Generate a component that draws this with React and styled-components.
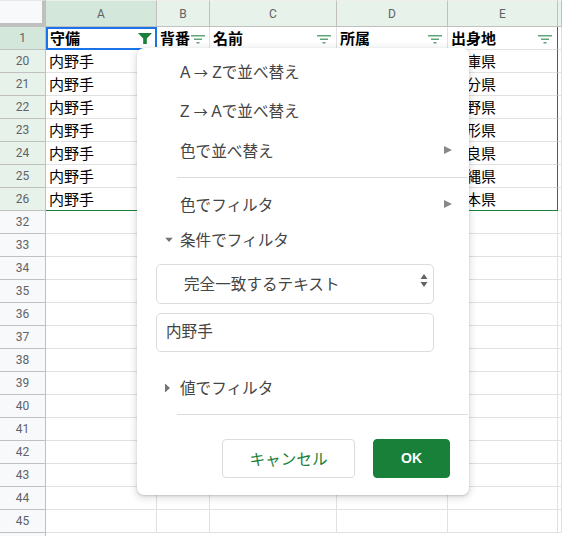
import React from 'react';
import styled, { createGlobalStyle } from 'styled-components';

const FONT = `Roboto, "Liberation Sans", "Noto Sans CJK JP", sans-serif`;
const MENU_FONT = `"Liberation Sans", "Noto Sans CJK JP", sans-serif`;

const GlobalStyle = createGlobalStyle`
  html, body {
    margin: 0;
    padding: 0;
    height: 100%;
    overflow: hidden;
    background: #fff;
  }
`;

const Sheet = styled.div`
  position: relative;
  width: 562px;
  height: 536px;
  overflow: hidden;
  font-family: ${FONT};
  display: grid;
  grid-template-columns: 46px 111px 53px 127px 111px 110px 4px;
  grid-auto-rows: 23px;
  grid-template-rows: 27px;
`;

const Corner = styled.div`
  box-sizing: border-box;
  background: #f8f9fa;
  border-top: 1px solid #e8e8e8;
  border-right: 4px solid #c0c0c0;
  border-bottom: 4px solid #c0c0c0;
`;

const ColHead = styled.div`
  box-sizing: border-box;
  display: flex;
  align-items: center;
  justify-content: center;
  padding-top: 1px;
  font-size: 12px;
  color: #5f6368;
  background: ${(p) => (p.$active ? '#d3e8da' : '#e6f2ea')};
  border-top: 1px solid #eeeeee;
  border-right: 1px solid #c0c0c0;
  border-bottom: 1px solid #c0c0c0;
`;

const RowHead = styled.div`
  box-sizing: border-box;
  display: flex;
  align-items: center;
  justify-content: center;
  font-size: 12px;
  color: #5f6368;
  background: ${(p) => (p.$tone === 'active' ? '#d3e8da' : p.$tone === 'range' ? '#e6f2ea' : '#f8f9fa')};
  border-right: 1px solid #c0c0c0;
  border-bottom: 1px solid #c0c0c0;
`;

const Cell = styled.div`
  box-sizing: border-box;
  position: relative;
  display: flex;
  align-items: center;
  padding-left: 3px;
  padding-bottom: 2px;
  font-size: 15px;
  font-weight: ${(p) => (p.$bold ? 700 : 400)};
  color: #000;
  white-space: nowrap;
  overflow: hidden;
  border-right: 1px solid ${(p) => (p.$edge ? '#1a8038' : '#e1e1e1')};
  border-bottom: 1px solid ${(p) => (p.$last ? '#1a8038' : '#e1e1e1')};
`;

const FilterSlot = styled.span`
  position: absolute;
  right: ${(p) => p.$right || 4}px;
  top: ${(p) => p.$top || 6}px;
  display: flex;
`;

const SelectedCell = styled(Cell)`
  overflow: visible;
  border: none;
  padding-left: 4px;
  box-shadow: inset 0 0 0 2px #1a73e8;
`;

const Handle = styled.span`
  position: absolute;
  right: -2px;
  bottom: -2px;
  width: 6px;
  height: 5px;
  background: #1a73e8;
  border: 1px solid #fff;
  border-right: none;
  border-bottom: none;
  box-sizing: border-box;
`;

const Popover = styled.div`
  position: absolute;
  left: 137px;
  top: 48px;
  box-sizing: border-box;
  width: 332px;
  height: 447px;
  background: #fff;
  border-radius: 7px;
  box-shadow: 0 2px 6px 2px rgba(60, 64, 67, 0.15), 0 1px 2px rgba(60, 64, 67, 0.2);
  padding-top: 5px;
  display: flex;
  flex-direction: column;
  font-family: ${MENU_FONT};
  color: #3c4043;
`;

const MenuItem = styled.div`
  box-sizing: border-box;
  display: flex;
  align-items: center;
  justify-content: space-between;
  height: ${(p) => p.$h}px;
  margin-top: ${(p) => p.$mt || 0}px;
  padding-left: 43px;
  padding-right: 17px;
  padding-bottom: ${(p) => p.$pb ?? 2}px;
  font-size: 15.6px;
  color: #444;
  position: relative;
  white-space: pre;
`;

const SortLabel = styled.span`
  white-space: pre;
`;

const ArrowGlyph = styled.span`
  font-family: "Noto Sans CJK JP", sans-serif;
  font-size: 14px;
`;

const Caret = styled.svg`
  position: absolute;
  left: ${(p) => p.$left}px;
  top: 50%;
  transform: translateY(-50%);
`;

const Separator = styled.div`
  height: 1px;
  background: #dadce0;
  margin-left: 40px;
  margin-right: 1px;
  margin-top: ${(p) => p.$mt || 0}px;
`;

const Field = styled.div`
  box-sizing: border-box;
  position: relative;
  display: flex;
  align-items: center;
  width: 278px;
  height: ${(p) => p.$h}px;
  margin-left: 19px;
  margin-top: ${(p) => p.$mt}px;
  padding-left: ${(p) => p.$pl}px;
  padding-bottom: ${(p) => p.$pb}px;
  border: 1px solid #dadce0;
  border-radius: 5px;
  font-size: 15.6px;
  color: #444;
`;

const Spinner = styled.svg`
  position: absolute;
  right: 5px;
  top: 9px;
`;

const Actions = styled.div`
  display: flex;
  justify-content: flex-end;
  gap: 18px;
  margin-top: 24px;
  padding-right: 19px;
`;

const Button = styled.div`
  box-sizing: border-box;
  display: flex;
  align-items: center;
  justify-content: center;
  height: 39px;
  width: ${(p) => (p.$primary ? 77 : 133)}px;
  padding-bottom: 1px;
  border-radius: 4px;
  border: 1px solid ${(p) => (p.$primary ? '#188038' : '#dadce0')};
  background: ${(p) => (p.$primary ? '#188038' : '#fff')};
  color: ${(p) => (p.$primary ? '#fff' : '#188038')};
  font-size: ${(p) => (p.$primary ? 14 : 15.6)}px;
  font-weight: ${(p) => (p.$primary ? 700 : 400)};
`;

const FilterIcon = () => (
  <svg width="16" height="12" viewBox="0 0 16 12">
    <rect x="1" y="2" width="14" height="1.5" fill="#5fa578" />
    <rect x="4" y="5.5" width="8" height="1.5" fill="#5fa578" />
    <rect x="6.5" y="9" width="3" height="1.5" fill="#5fa578" />
  </svg>
);

const ActiveFilterIcon = () => (
  <svg width="16" height="13" viewBox="0 0 16 13">
    <path d="M1 1h14L9.8 6.6V12H6.2V6.6z" fill="#188038" />
  </svg>
);

const SubmenuArrow = () => (
  <svg width="8" height="8" viewBox="0 0 8 8"><path d="M0 0l8 4-8 4z" fill="#888" /></svg>
);

const columns = ['A', 'B', 'C', 'D', 'E', ''];
const headers = ['守備', '背番', '名前', '所属', '出身地'];
const dataRows = [
  [20, '兵庫県'],
  [21, '大分県'],
  [22, '長野県'],
  [23, '山形県'],
  [24, '奈良県'],
  [25, '沖縄県'],
  [26, '熊本県'],
];
const emptyRows = Array.from({ length: 14 }, (_, i) => 32 + i);

const App = () => {
  return (
    <>
      <GlobalStyle />
      <Sheet>
        <Corner />
        {columns.map((c, i) => (
          <ColHead key={i} $active={c === 'A'}>{c}</ColHead>
        ))}

        {/* row 1 with filter headers */}
        <RowHead $tone="active">1</RowHead>
        <SelectedCell $bold>
          {headers[0]}
          <FilterSlot $top={5}><ActiveFilterIcon /></FilterSlot>
          <Handle />
        </SelectedCell>
        <Cell $bold>
          {headers[1]}
          <FilterSlot $right={3}><FilterIcon /></FilterSlot>
        </Cell>
        <Cell $bold>
          {headers[2]}
          <FilterSlot><FilterIcon /></FilterSlot>
        </Cell>
        <Cell $bold>
          {headers[3]}
          <FilterSlot><FilterIcon /></FilterSlot>
        </Cell>
        <Cell $bold $edge>
          {headers[4]}
          <FilterSlot><FilterIcon /></FilterSlot>
        </Cell>
        <Cell />

        {dataRows.map(([n, place], i) => {
          const last = i === dataRows.length - 1;
          return (
            <React.Fragment key={n}>
              <RowHead $tone="range">{n}</RowHead>
              <Cell $last={last}>内野手</Cell>
              <Cell $last={last} />
              <Cell $last={last} />
              <Cell $last={last} />
              <Cell $last={last} $edge>{place}</Cell>
              <Cell />
            </React.Fragment>
          );
        })}

        {emptyRows.map((n) => (
          <React.Fragment key={n}>
            <RowHead>{n}</RowHead>
            <Cell /><Cell /><Cell /><Cell /><Cell /><Cell />
          </React.Fragment>
        ))}
        <RowHead />

        <Popover>
          <MenuItem $h={38}>
            <SortLabel>A <ArrowGlyph>→</ArrowGlyph> Zで並べ替え</SortLabel>
          </MenuItem>
          <MenuItem $h={40}>
            <SortLabel>Z <ArrowGlyph>→</ArrowGlyph> Aで並べ替え</SortLabel>
          </MenuItem>
          <MenuItem $h={40} $pb={3}>
            色で並べ替え
            <SubmenuArrow />
          </MenuItem>
          <MenuItem $h={6} $pb={0} />
          <Separator />
          <MenuItem $h={52} $pb={1}>
            色でフィルタ
            <SubmenuArrow />
          </MenuItem>
          <MenuItem $h={19}>
            <Caret $left={28} width="8" height="5" viewBox="0 0 8 5"><path d="M0 0h8L4 4.5z" fill="#70757a" /></Caret>
            条件でフィルタ
          </MenuItem>
          <Field $h={40} $mt={15} $pl={27} $pb={3}>
            完全一致するテキスト
            <Spinner width="8" height="13" viewBox="0 0 8 13">
              <path d="M4 0l3.5 5h-7zM4 13L.5 8h7z" fill="#5f6368" />
            </Spinner>
          </Field>
          <Field $h={39} $mt={9} $pl={9} $pb={6}>内野手</Field>
          <MenuItem $h={36} $mt={18} $pb={3}>
            <Caret $left={28} width="5" height="9" viewBox="0 0 5 9"><path d="M0 0l5 4.5L0 9z" fill="#70757a" /></Caret>
            値でフィルタ
          </MenuItem>
          <Separator $mt={8} />
          <Actions>
            <Button>キャンセル</Button>
            <Button $primary>OK</Button>
          </Actions>
        </Popover>
      </Sheet>
    </>
  );
};

export default App;
